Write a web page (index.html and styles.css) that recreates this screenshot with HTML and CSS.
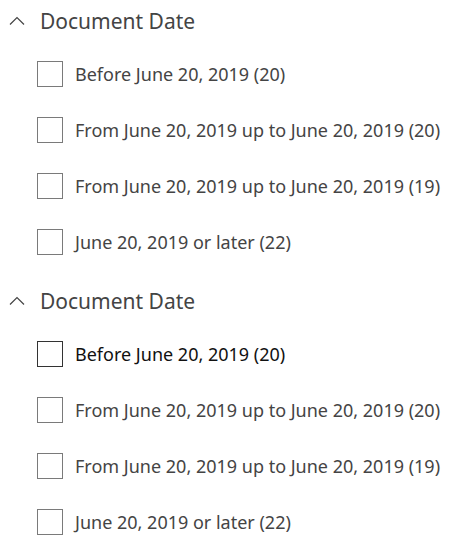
FILE: index.html
```html
<!DOCTYPE html>
<html>
<head>
<meta charset="utf-8">
<link rel="stylesheet" href="styles.css">
</head>
<body>
<div class="panel">
  <section class="group">
    <div class="header">
      <svg class="chev" width="16" height="10" viewBox="0 0 16 10"><polyline points="1,8.5 8,1.5 15,8.5" fill="none" stroke="#444" stroke-width="1.2"/></svg>
      <span class="title">Document Date</span>
    </div>
    <ul class="list">
      <li class="item"><span class="box"></span><span class="label">Before June 20, 2019 (20)</span></li>
      <li class="item"><span class="box"></span><span class="label">From June 20, 2019 up to June 20, 2019 (20)</span></li>
      <li class="item"><span class="box"></span><span class="label">From June 20, 2019 up to June 20, 2019 (19)</span></li>
      <li class="item"><span class="box"></span><span class="label">June 20, 2019 or later (22)</span></li>
    </ul>
  </section>
  <section class="group">
    <div class="header">
      <svg class="chev" width="16" height="10" viewBox="0 0 16 10"><polyline points="1,8.5 8,1.5 15,8.5" fill="none" stroke="#444" stroke-width="1.2"/></svg>
      <span class="title">Document Date</span>
    </div>
    <ul class="list">
      <li class="item hover"><span class="box"></span><span class="label">Before June 20, 2019 (20)</span></li>
      <li class="item"><span class="box"></span><span class="label">From June 20, 2019 up to June 20, 2019 (20)</span></li>
      <li class="item"><span class="box"></span><span class="label">From June 20, 2019 up to June 20, 2019 (19)</span></li>
      <li class="item"><span class="box"></span><span class="label">June 20, 2019 or later (22)</span></li>
    </ul>
  </section>
</div>
</body>
</html>
```
FILE: styles.css
```css
html, body {
  margin: 0;
  padding: 0;
  background: #fff;
}
body {
  font-family: "Noto Sans", "Open Sans", sans-serif;
  color: #333;
}
.panel {
  display: flex;
  flex-direction: column;
  gap: 10px;
}
.header {
  height: 42px;
  display: flex;
  align-items: center;
  padding-left: 9px;
}
.chev {
  display: block;
  margin-right: 15px;
  margin-top: -1px;
}
.title {
  font-size: 21px;
  color: #444;
}
.list {
  list-style: none;
  margin: 4px 0 0 0;
  padding: 0 0 0 37px;
}
.item {
  height: 56px;
  display: flex;
  align-items: center;
}
.box {
  width: 24px;
  height: 24px;
  border: 1px solid #7a7a7a;
  flex: none;
  margin-right: 12px;
}
.label {
  font-size: 18px;
  color: #444;
}
.item.hover .box {
  border-color: #333;
}
.item.hover .label {
  color: #111;
}
```
